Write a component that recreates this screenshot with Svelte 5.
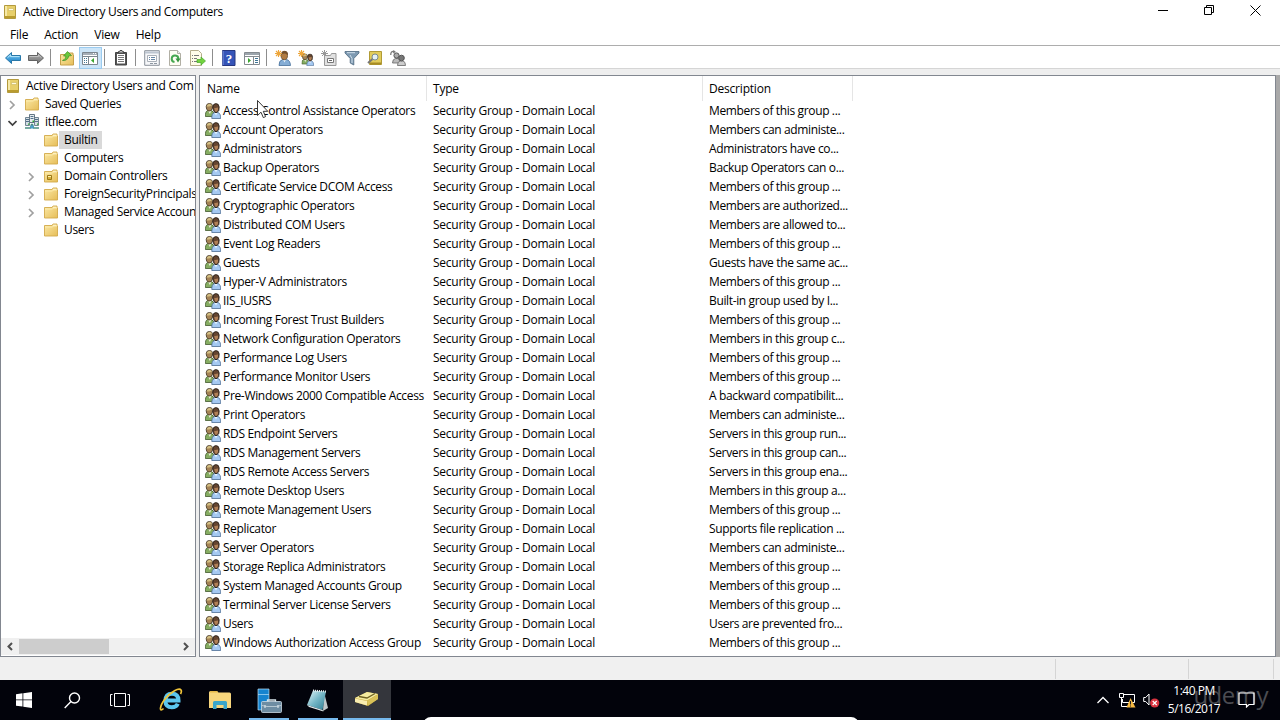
<script>
  const tools = ['back', 'forward', '|', 'up', 'tree', '|', 'clipboard', '|', 'props', 'refresh', 'export', '|',
    'help', 'pane', '|', 'newuser', 'newgroup', 'newou', 'filter', 'find', 'addgroup']

  const nodes = [
    { name: 'Active Directory Users and Com', icon: 'book', level: 0 },
    { name: 'Saved Queries', icon: 'folder', level: 1, arrow: 'closed' },
    { name: 'itflee.com', icon: 'domain', level: 1, arrow: 'open' },
    { name: 'Builtin', icon: 'folder', level: 2, selected: true },
    { name: 'Computers', icon: 'folder', level: 2 },
    { name: 'Domain Controllers', icon: 'ou', level: 2, arrow: 'closed' },
    { name: 'ForeignSecurityPrincipals', icon: 'folder', level: 2, arrow: 'closed' },
    { name: 'Managed Service Accoun', icon: 'folder', level: 2, arrow: 'closed' },
    { name: 'Users', icon: 'folder', level: 2 }
  ]

  const type = 'Security Group - Domain Local'
  const groups = [
    ['Access Control Assistance Operators', 'Members of this group ...'],
    ['Account Operators', 'Members can administe...'],
    ['Administrators', 'Administrators have co...'],
    ['Backup Operators', 'Backup Operators can o...'],
    ['Certificate Service DCOM Access', 'Members of this group ...'],
    ['Cryptographic Operators', 'Members are authorized...'],
    ['Distributed COM Users', 'Members are allowed to...'],
    ['Event Log Readers', 'Members of this group ...'],
    ['Guests', 'Guests have the same ac...'],
    ['Hyper-V Administrators', 'Members of this group ...'],
    ['IIS_IUSRS', 'Built-in group used by I...'],
    ['Incoming Forest Trust Builders', 'Members of this group ...'],
    ['Network Configuration Operators', 'Members in this group c...'],
    ['Performance Log Users', 'Members of this group ...'],
    ['Performance Monitor Users', 'Members of this group ...'],
    ['Pre-Windows 2000 Compatible Access', 'A backward compatibilit...'],
    ['Print Operators', 'Members can administe...'],
    ['RDS Endpoint Servers', 'Servers in this group run...'],
    ['RDS Management Servers', 'Servers in this group can...'],
    ['RDS Remote Access Servers', 'Servers in this group ena...'],
    ['Remote Desktop Users', 'Members in this group a...'],
    ['Remote Management Users', 'Members of this group ...'],
    ['Replicator', 'Supports file replication ...'],
    ['Server Operators', 'Members can administe...'],
    ['Storage Replica Administrators', 'Members of this group ...'],
    ['System Managed Accounts Group', 'Members of this group ...'],
    ['Terminal Server License Servers', 'Members of this group ...'],
    ['Users', 'Users are prevented fro...'],
    ['Windows Authorization Access Group', 'Members of this group ...']
  ]
</script>

{#snippet icon(name)}
  <svg class="icon" width="16" height="16" viewBox="0 0 16 16"><use href="#{name}" /></svg>
{/snippet}

<svg class="defs" width="0" height="0">
  <defs>
    <linearGradient id="gold" x1="0" y1="0" x2="1" y2="1">
      <stop offset="0" stop-color="#fbe9a6" /><stop offset="1" stop-color="#e6bd58" />
    </linearGradient>
    <linearGradient id="blue" x1="0" y1="0" x2="0" y2="1">
      <stop offset="0" stop-color="#7fd0f5" /><stop offset="1" stop-color="#1479c4" />
    </linearGradient>
    <linearGradient id="grey" x1="0" y1="0" x2="0" y2="1">
      <stop offset="0" stop-color="#b4b4b4" /><stop offset="1" stop-color="#707070" />
    </linearGradient>
    <linearGradient id="pad" x1="0" y1="0" x2="1" y2="1">
      <stop offset="0" stop-color="#e8f8fa" /><stop offset=".5" stop-color="#75b7c6" /><stop offset="1" stop-color="#2d7c92" />
    </linearGradient>
    <symbol id="book" viewBox="0 0 16 16">
      <path d="M2.500 1.500h11v13h-11z" fill="#e7cf6a" stroke="#b39a3d" />
      <path d="M3 12h10v2H3z" fill="#b99b2e" />
      <path d="M3 2h2v10H3z" fill="#f6e9a7" />
      <path d="M6.500 4.500h5v2h-5z" fill="#fffbe0" stroke="#c9b35a" stroke-width=".6" />
    </symbol>
    <symbol id="folder" viewBox="0 0 16 16">
      <path d="M1.500 3.500h7.500l1-1.500h4v2h.5v10h-13z" fill="url(#gold)" stroke="#d2a94a" stroke-width=".9" />
      <path d="M10 3.300h3.500" stroke="#fff8d8" />
      <path d="M2 5h7.500l1-1H14" fill="none" stroke="#fff0b5" stroke-width=".8" />
    </symbol>
    <symbol id="ou" viewBox="0 0 16 16">
      <use href="#folder" />
      <path d="M4.500 7.500h4v4h-4z" fill="#d8b03a" stroke="#9b7818" />
      <path d="M5 8.500h3" stroke="#fff2b0" />
    </symbol>
    <symbol id="domain" viewBox="0 0 16 16">
      <path d="M1.500 3.500h4v8h-4zM10.500 3.500h4v8h-4z" fill="#d5dee4" stroke="#718594" />
      <path d="M5.500.500h5v8h-5z" fill="#e6ecef" stroke="#647785" />
      <path d="M6.500 2.500h3M6.500 4.500h3M2 5.500h3M2 7.500h3M11 5.500h3M11 7.500h3" stroke="#52718a" />
      <path d="M1 14h5.500l1-3.500h1l1 3.500H15" fill="none" stroke="#4b8e83" stroke-width="1.500" />
      <path d="M6.500 11.500h3v3h-3z" fill="#4a9ed0" />
      <path d="M8.500 6.500h1.500v1.500H8.500zM4 9.500h1.300v1.300H4zM13 9.500h1.300v1.300H13z" fill="#2cab2c" />
    </symbol>
    <symbol id="group" viewBox="0 0 16 16">
      <path d="M.4 13.500Q.2 8.500 2.500 7.600h4q2.900 1 2.900 5.900z" fill="#86ad62" stroke="#40582c" stroke-width=".8" />
      <path d="M3.200 8l1.700 3L6.300 8" fill="#eff3da" />
      <path d="M1.200 3.500Q1.400.4 4.500.4q3 0 3.100 3l-.4 2.500-1.800 2H3.200L1.600 6z" fill="#a58355" stroke="#3d3220" stroke-width=".8" />
      <path d="M1.800 3.500Q1.900 1 4.500 1t2.500 1.600L4 3.600z" fill="#d5c184" />
      <path d="M6.800 15.500q-.2-5.300 2.700-6H13q2.700.8 2.700 6z" fill="#a5c9f2" stroke="#4d6d94" stroke-width=".8" />
      <path d="M9.500 9.800l1.500 2.700 1.500-2.700" fill="#e9f4ff" />
      <path d="M7.800 4.200Q8 .6 10.900.6T14.200 4l-.4 3.500-1.800 2h-2L8.400 7.500z" fill="#654530" stroke="#211a14" stroke-width=".8" />
      <path d="M9.100 5.200L13 4.500v2.200l-1.200 2h-1.400z" fill="#b18056" />
    </symbol>
    <symbol id="back" viewBox="0 0 16 16">
      <path d="M.5 8l6-5.500v3h9v5h-9v3z" fill="url(#blue)" stroke="#2877a8" />
      <path d="M2.500 7.700l3-2.700v1.600h9" fill="none" stroke="#b6e6fb" />
    </symbol>
    <symbol id="forward" viewBox="0 0 16 16">
      <path d="M15.500 8l-6-5.500v3h-9v5h9v3z" fill="url(#grey)" stroke="#626262" />
      <path d="M1.500 6.500h9V5l3 2.700" fill="none" stroke="#cacaca" stroke-width=".8" />
    </symbol>
    <symbol id="up" viewBox="0 0 16 16">
      <path d="M1.500 4.500h7l1-1.500h4.500v2h.5v10h-13z" fill="url(#gold)" stroke="#c7a04a" />
      <path d="M3.500 10.500c2.500-1 3.300-2.500 3.300-4.500H4.500L8.500 1.500l4 4-2.800.5c-.4 3-2.700 5-6.200 4.500z" fill="#69c83c" stroke="#3c8e27" stroke-width=".7" />
    </symbol>
    <symbol id="tree" viewBox="0 0 16 16">
      <path d="M.5 2.500h15v12H.5z" fill="#fff" stroke="#7d8790" />
      <path d="M1 4h14" stroke="#a6afb8" stroke-width="2" />
      <path d="M11 3.500h1m1 0h1" stroke="#fff" />
      <path d="M1 6.500h14M6.500 7v8" stroke="#7d8790" />
      <path d="M2 8.500h1m1 0h1m-3 2h1m1 0h1m-3 2h1m1 0h1" stroke="#3e7594" />
      <path d="M12 8v5L9 10.500z" fill="#3ba52f" />
    </symbol>
    <symbol id="clipboard" viewBox="0 0 16 16">
      <path d="M2.500 2.500h11v12.500h-11z" fill="#555" stroke="#444" />
      <path d="M4 4h8v9.500H4z" fill="#fff" />
      <path d="M5.500 3V1.500h1L7 .5h2l.5 1h1V3z" fill="#bbb" stroke="#444" />
      <path d="M5 5.500h6m-6 2h6m-6 2h6m-6 2h6" stroke="#777" />
    </symbol>
    <symbol id="props" viewBox="0 0 16 16">
      <path d="M.7.700h14.600v14.600H.7z" fill="#f6f7f9" stroke="#8b929a" />
      <path d="M1 2.500h14" stroke="#bcc5d0" stroke-width="2" />
      <path d="M3.500 5.500h9v6h-9z" fill="#fff" stroke="#aab0b8" />
      <path d="M5 7.500h1m1 0h4m-6 2h1m1 0h4" stroke="#6685a5" />
      <path d="M6 13.500h3m1 0h3" stroke="#8f98a2" />
    </symbol>
    <symbol id="sheet" viewBox="0 0 16 16">
      <path d="M2.500.500h8l3 3v12h-11z" fill="#fffef4" stroke="#b1afa4" /><path d="M10.500.500v3h3" fill="#eee" stroke="#b1afa4" />
    </symbol>
    <symbol id="refresh" viewBox="0 0 16 16">
      <use href="#sheet" />
      <path d="M7.500 12A3.300 3.300 0 1 1 11.300 9" fill="none" stroke="#47a851" stroke-width="2" />
      <path d="M8.500 8.500h5L11 12.500z" fill="#379540" />
    </symbol>
    <symbol id="export" viewBox="0 0 16 16">
      <path d="M.5.500h8l3 3v12H.5z" fill="#fffce9" stroke="#b5ad8c" />
      <path d="M2 5.500h1m1 0h5M2 8.500h1m1 0h3M2 11.500h1m1 0h5" stroke="#777" />
      <path d="M7 9.500h4V7l4.500 4-4.500 4v-2.500H7z" fill="#73d33f" stroke="#43a728" stroke-width=".7" />
    </symbol>
    <symbol id="help" viewBox="0 0 16 16">
      <path d="M1.500.5h12.500v15H1.500z" fill="#3554b8" stroke="#26367f" /><path d="M2 1v14" stroke="#7f95db" />
      <text x="8" y="12.800" class="mark">?</text>
    </symbol>
    <symbol id="pane" viewBox="0 0 16 16">
      <path d="M.5 2.500h15v12H.5z" fill="#fff" stroke="#858b90" />
      <path d="M1 4h14" stroke="#9ca5ac" stroke-width="2" /><path d="M1 6.500h14M9.500 7v8" stroke="#858b90" />
      <path d="M11 8.500h3m-3 2h3m-3 2h3" stroke="#3e7594" /><path d="M4 8v5l3-2.500z" fill="#3ba52f" />
    </symbol>
    <symbol id="spark" viewBox="0 0 16 16">
      <path d="M3.500 0v7M0 3.500h7M1 1l5 5M6 1L1 6" stroke="#eda53a" stroke-width="1.100" />
    </symbol>
    <symbol id="newuser" viewBox="0 0 16 16">
      <path d="M4 15.500q-.2-5 3.500-6h4q3.700.7 4 6z" fill="#85add5" stroke="#456f9a" stroke-width=".8" />
      <path d="M8 9.500l1.500 3 1.500-3" fill="#e8f3fb" />
      <ellipse cx="9.300" cy="5.500" rx="3.200" ry="4.200" fill="#b17c43" stroke="#62472b" stroke-width=".8" />
      <path d="M6.500 4Q7 1 10 1t3 4l-3-1.500z" fill="#74502c" />
      <use href="#spark" />
    </symbol>
    <symbol id="newgroup" viewBox="0 0 16 16">
      <g transform="translate(3.500 3.500) scale(.78)"><use href="#group" width="16" height="16" /></g>
      <use href="#spark" />
    </symbol>
    <symbol id="newou" viewBox="0 0 16 16">
      <path d="M3.500 5.500h6l1-2h4.500v12h-11.500z" fill="#e1e1e1" stroke="#999" />
      <path d="M6.500 8.500h6v4h-6z" fill="#fff" stroke="#777" /><path d="M8 10.500h3" stroke="#666" />
      <path d="M3.500 0v7M0 3.500h7M1 1l5 5M6 1L1 6" stroke="#999" />
    </symbol>
    <symbol id="filter" viewBox="0 0 16 16">
      <path d="M1 1.500h14v1.500L9.800 8.500v6.500L6.200 13V8.500L1 3z" fill="#7e9ab2" stroke="#4d6880" stroke-width=".8" />
      <path d="M3 2.700h8M6 5l2 3.500v4.500" fill="none" stroke="#d1e0ec" />
    </symbol>
    <symbol id="find" viewBox="0 0 16 16">
      <path d="M2.500 1.500h12v13h-12z" fill="#e2cc5b" stroke="#b19b35" /><path d="M3 12.500h11v2H3z" fill="#a78b24" />
      <path d="M5.500 9L1 13" stroke="#777" stroke-width="2" /><circle cx="8" cy="7" r="3" fill="#e5f1f5" stroke="#7b8b91" />
    </symbol>
    <symbol id="addgroup" viewBox="0 0 16 16">
      <path d="M2.500 13q0-4 3-4.500h2.500Q10.500 9 10.500 13z" fill="#bbb" stroke="#666" stroke-width=".8" /><circle cx="6.500" cy="5.500" r="2.600" fill="#aaa" stroke="#555" />
      <path d="M7.500 15.500q0-4 2.500-4.500h3q2.500.5 2.500 4.500z" fill="#ccc" stroke="#666" stroke-width=".8" /><circle cx="11.500" cy="8" r="2.800" fill="#777" stroke="#555" />
      <path d="M.8 5Q.5 1 4 1.500" fill="none" stroke="#777" stroke-width="1.300" /><path d="M3.500 0L6 2 3 3.500z" fill="#777" />
    </symbol>
  </defs>
</svg>

<div class="screen">
  <header class="title">
    {@render icon('book')}
    <span>Active Directory Users and Computers</span>
    <div class="controls">
      <svg width="11" height="11" viewBox="0 0 11 11"><path d="M0 5.500h10" /></svg>
      <svg width="11" height="11" viewBox="0 0 11 11"><path d="M.5 2.500h7v7h-7zM2.500 2.500v-2h7v7h-2" /></svg>
      <svg width="11" height="11" viewBox="0 0 11 11"><path d="M.5.500l10 10M10.500.500l-10 10" /></svg>
    </div>
  </header>

  <nav class="menu">
    <span>File</span><span>Action</span><span>View</span><span>Help</span>
  </nav>

  <div class="toolbar">
    {#each tools as tool}
      {#if tool === '|'}
        <i class="sep"></i>
      {:else}
        <div class="tool" class:active={tool === 'tree'}>{@render icon(tool)}</div>
      {/if}
    {/each}
  </div>

  <main>
    <aside>
      <div class="tree">
        {#each nodes as node}
          <div class="node level{node.level}">
            <span class="arrow">
              {#if node.arrow === 'closed'}
                <svg width="9" height="10" viewBox="0 0 9 10"><path d="M2 1l4 4-4 4" stroke="#a0a0a0" /></svg>
              {:else if node.arrow === 'open'}
                <svg width="9" height="10" viewBox="0 0 9 10"><path d="M.5 3l4 4 4-4" stroke="#404040" /></svg>
              {/if}
            </span>
            {@render icon(node.icon)}
            <span class="label" class:selected={node.selected}>{node.name}</span>
          </div>
        {/each}
      </div>
      <div class="scrollbar">
        <svg width="17" height="17" viewBox="0 0 17 17"><path d="M11 5L7.500 8.500 11 12" /></svg>
        <div class="thumb"></div>
        <svg width="17" height="17" viewBox="0 0 17 17"><path d="M6 5l3.500 3.500L6 12" /></svg>
      </div>
    </aside>

    <section class="list">
      <div class="row head">
        <div>Name</div><div>Type</div><div>Description</div>
      </div>
      {#each groups as [name, description]}
        <div class="row">
          <div class="name">{@render icon('group')}<span>{name}</span></div>
          <div class="type">{type}</div>
          <div class="desc">{description}</div>
        </div>
      {/each}
    </section>
    <div class="edge"></div>
  </main>

  <footer class="status"><i></i><i></i><i></i></footer>

  <div class="taskbar">
    <div class="task">
      <svg width="16" height="16" viewBox="0 0 16 16"><path d="M0 2.200l6.500-.9v6.200H0zM7.300 1.200L16 0v7.500H7.300zM0 8.300h6.500v6.300L0 13.700zM7.300 8.300H16V16l-8.700-1.200z" fill="#fff" /></svg>
    </div>
    <div class="task">
      <svg width="17" height="17" viewBox="0 0 17 17" fill="none" stroke="#fff" stroke-width="1.400"><circle cx="10.500" cy="6" r="5" /><path d="M7 9.500L.7 16" /></svg>
    </div>
    <div class="task">
      <svg width="20" height="16" viewBox="0 0 20 16" fill="none" stroke="#fff"><path d="M4.500 1.500h11v13h-11zM2.500 2.500h-2v11h2M17.500 2.500h2v11h-2" /></svg>
    </div>
    <div class="task app">
      <svg width="24" height="24" viewBox="0 0 24 24" fill="none">
        <path d="M6.500 12.500h13q0-6.800-6.500-6.800T6.300 13q.3 6.300 6.500 6.300 4.500 0 6-3.500" stroke="#5cc6ee" stroke-width="4" />
        <path d="M4.500 20.500C0 25 .5 18 6 11 12 3.500 20-.5 22 2c1 1.300 0 3-.5 4" stroke="#f0c43a" stroke-width="1.700" />
      </svg>
    </div>
    <div class="task app">
      <svg width="22" height="20" viewBox="0 0 22 20">
        <path d="M0 2.500Q0 1 1.500 1H8l1.500 1.500h11Q22 2.500 22 4v14H0z" fill="#f7d67d" /><path d="M1 1h7l1 1.500H1z" fill="#e4b748" />
        <path d="M4 19v-6.500q0-1.500 1.500-1.500h11q1.500 0 1.500 1.500V19h-3.500v-4h-7v4z" fill="#3aa6ca" />
      </svg>
    </div>
    <div class="task app running">
      <svg width="25" height="25" viewBox="0 0 25 25">
        <path d="M1 1h11v21H1z" fill="#1684cf" /><path d="M1 1h11v21H1zM1 6.500h11" fill="none" stroke="#b9e0f5" stroke-width=".7" />
        <path d="M10.500 14v-2h8V14" fill="none" stroke="#d9e6ec" stroke-width="1.300" />
        <rect x="4.500" y="13.500" width="20" height="11" rx="1" fill="#6e8da3" stroke="#ccdbe4" stroke-width=".8" />
        <path d="M5 17.500l5 1h9l5-1" fill="none" stroke="#b6c8d3" /><path d="M8 17v3m13-3v3" stroke="#e8f0f4" />
      </svg>
    </div>
    <div class="task app running">
      <svg width="24" height="24" viewBox="0 0 24 24">
        <path d="M18 4l4 16-5 3z" fill="#bfc8ca" /><path d="M7 2.500l13 1-3.500 18.500L1 17z" fill="url(#pad)" />
        <path d="M7 2.500l13 1" stroke="#e8eded" stroke-width="2" stroke-dasharray="1 1" /><path d="M1 17l15.500 5 1 1.500L3 19z" fill="#e4eced" />
      </svg>
    </div>
    <div class="task app running current">
      <svg width="24" height="24" viewBox="0 0 24 24">
        <path d="M0 10L12 4l11 2v5l-10 7L0 14z" fill="#c9ae44" /><path d="M0 10L12 4l11 2-11 6.500z" fill="#f4eba0" />
        <path d="M0 10.500l12 2.500v4.500L0 14z" fill="#f9edb0" /><path d="M12 13l11-6.500V11l-10 6.500z" fill="#d9c258" />
        <path d="M4 8.500l8 1.500 8-4.500" fill="none" stroke="#6e6121" stroke-width="1.400" />
      </svg>
    </div>

    <div class="tray">
      <svg width="12" height="8" viewBox="0 0 12 8" fill="none" stroke="#fff" stroke-width="1.300"><path d="M.5 7L6 1.500 11.500 7" /></svg>
      <svg class="net" width="17" height="15" viewBox="0 0 17 15">
        <path d="M5 1.500h10.500v8H3.500V6M.5.500h4v4h-4zM2.500 5v8.500h8" fill="none" stroke="#fff" />
        <path d="M11.500 5L16.500 14.500h-9z" fill="#f5b942" /><path d="M11.500 8v3.500m0 1v1" stroke="#222" />
      </svg>
      <svg class="sound" width="17" height="15" viewBox="0 0 17 15">
        <path d="M.7 4.500h2L6 1v11L2.700 8.500h-2z" fill="none" stroke="#fff" />
        <circle cx="11.700" cy="10" r="4.600" fill="#d8333f" /><path d="M9.700 8l4 4m0-4l-4 4" stroke="#fff" stroke-width="1.200" />
      </svg>
      <div class="clock"><span>1:40 PM</span><span>5/16/2017</span></div>
      <svg class="action" width="17" height="16" viewBox="0 0 17 16" fill="none" stroke="#fff" stroke-width="1.200"><path d="M1 1h15v11.500h-5l-2.500 2.500v-2.500H1z" /></svg>
    </div>
    <div class="watermark">udemy</div>
    <div class="sheet"></div>
  </div>

  <svg class="cursor" width="13" height="20" viewBox="0 0 13 20"><path d="M.5.500v15l3.500-3.300 2.300 5.400 2.300-1-2.300-5.300h4.500z" fill="#fff" stroke="#222" stroke-width=".9" /></svg>
</div>

<style>
  :global(body) {
    overflow: hidden;
  }
  .screen {
    position: relative;
    display: flex;
    flex-direction: column;
    width: 1280px;
    height: 720px;
    background: #fff;
    color: #000;
    font: 12px/18px "Open Sans", "Noto Sans", sans-serif;
    letter-spacing: -0.2px;
    white-space: nowrap;
    overflow: hidden;
  }
  .defs {
    position: absolute;
  }
  svg {
    display: block;
    flex: none;
  }
  .mark {
    font: bold 13px "Liberation Serif", serif;
    fill: #fff;
    text-anchor: middle;
  }
  .title {
    display: flex;
    align-items: center;
    height: 24px;
    padding-left: 2px;
    gap: 5px;
    letter-spacing: -0.36px;
  }
  .controls {
    display: flex;
    gap: 35px;
    margin: -3px 19px 0 auto;
    fill: none;
    stroke: #000;
  }
  .menu {
    display: flex;
    align-items: center;
    gap: 16px;
    height: 21px;
    padding-left: 10px;
    border-bottom: 1px solid #adadad;
    line-height: 17px;
  }
  .toolbar {
    display: flex;
    align-items: center;
    height: 23px;
    padding: 1px 0 0 1.5px;
    border-bottom: 1px solid #d5d5d5;
    box-sizing: border-box;
  }
  .tool {
    display: flex;
    align-items: center;
    justify-content: center;
    width: 23px;
    height: 22px;
    box-sizing: border-box;
  }
  .active {
    background: #cce5f8;
    border: 1px solid #9bcbef;
  }
  .sep {
    width: 1px;
    height: 17px;
    margin: 0 4.5px 0 2.5px;
    background: #8d8d8d;
  }
  main {
    display: flex;
    height: 582px;
    padding-top: 6px;
    background: #eee;
  }
  aside {
    display: flex;
    flex-direction: column;
    justify-content: space-between;
    width: 196px;
    margin-right: 3px;
    border: 1px solid #828790;
    box-sizing: border-box;
    background: #fff;
    overflow: hidden;
  }
  .tree {
    padding-top: 1px;
    overflow: hidden;
    letter-spacing: -0.32px;
  }
  .node {
    display: flex;
    align-items: center;
    height: 18px;
  }
  .arrow {
    flex: none;
    width: 16px;
    padding-left: 7px;
    fill: none;
    stroke-width: 1.7;
  }
  .arrow svg {
    margin-top: 2px;
  }
  .level0 .arrow {
    display: none;
  }
  .level0 {
    padding-left: 4px;
    letter-spacing: -0.3px;
  }
  .level2 .arrow {
    padding-left: 26px;
  }
  .label {
    margin-left: 1px;
    padding: 0 4px;
  }
  .level1 .label {
    padding-left: 4px;
  }
  .level2 .label {
    padding-left: 5px;
    margin-left: 0;
  }
  .selected {
    background: #d9d9d9;
  }
  .scrollbar {
    display: flex;
    height: 17px;
    margin-bottom: 1px;
    background: #f0f0f0;
    fill: none;
    stroke: #505050;
    stroke-width: 2;
  }
  .thumb {
    width: 90px;
    height: 15px;
    margin: 1px auto 0 1px;
    background: #cdcdcd;
  }
  .list {
    width: 1077px;
    padding-left: 5px;
    border: 1px solid #828790;
    box-sizing: border-box;
    background: #fff;
  }
  .row {
    display: grid;
    grid-template-columns: 222px 276px 150px;
    align-items: center;
    height: 19px;
  }
  .row > div {
    padding-left: 6px;
  }
  .row > .name {
    display: flex;
    align-items: center;
    gap: 2px;
    padding-left: 0;
    letter-spacing: -0.33px;
  }
  .type {
    letter-spacing: -0.26px;
  }
  .desc {
    letter-spacing: -0.36px;
  }
  .head {
    height: 25px;
  }
  .head > div {
    height: 25px;
    line-height: 25px;
    border-right: 1px solid #e5e5e5;
  }
  .head > div:first-child {
    padding-left: 2px;
  }
  .edge {
    flex: 1;
    background: #a9a9a9;
  }
  .status {
    display: flex;
    justify-content: flex-end;
    height: 23px;
    padding-right: 6px;
    background: #f0f0f0;
  }
  .status i {
    width: 84px;
    margin: 2px 0 1px;
    border-right: 1px solid #d5d5d5;
  }
  .status i:nth-child(2) {
    width: 132px;
  }
  .taskbar {
    position: relative;
    display: flex;
    height: 40px;
    background: #02030b;
    color: #fff;
  }
  .task {
    display: flex;
    align-items: center;
    justify-content: center;
    width: 48px;
    height: 40px;
  }
  .task:nth-child(3) {
    margin-right: 2px;
  }
  .app {
    margin-left: 1px;
  }
  .running {
    background: linear-gradient(#76b9ed, #76b9ed) center bottom / 40px 2px no-repeat;
  }
  .current {
    background: linear-gradient(#76b9ed, #76b9ed) center bottom / 48px 2px no-repeat #34363c;
  }
  .tray {
    position: relative;
    z-index: 1;
    display: flex;
    align-items: center;
    margin-left: auto;
    padding-right: 25px;
  }
  .net {
    margin-left: 10px;
  }
  .sound {
    margin-left: 7px;
  }
  .clock {
    display: flex;
    flex-direction: column;
    align-items: center;
    width: 54px;
    margin: 0 17px 0 7px;
    letter-spacing: -0.5px;
  }
  .watermark {
    position: absolute;
    right: 12px;
    top: 0;
    color: #4b4c52;
    font-size: 24px;
    line-height: 30px;
    letter-spacing: -0.5px;
  }
  .sheet {
    position: absolute;
    left: 423px;
    top: 37px;
    width: 436px;
    height: 20px;
    border-radius: 8px;
    background: #fff;
  }
  .cursor {
    position: absolute;
    left: 257px;
    top: 100px;
  }
</style>
